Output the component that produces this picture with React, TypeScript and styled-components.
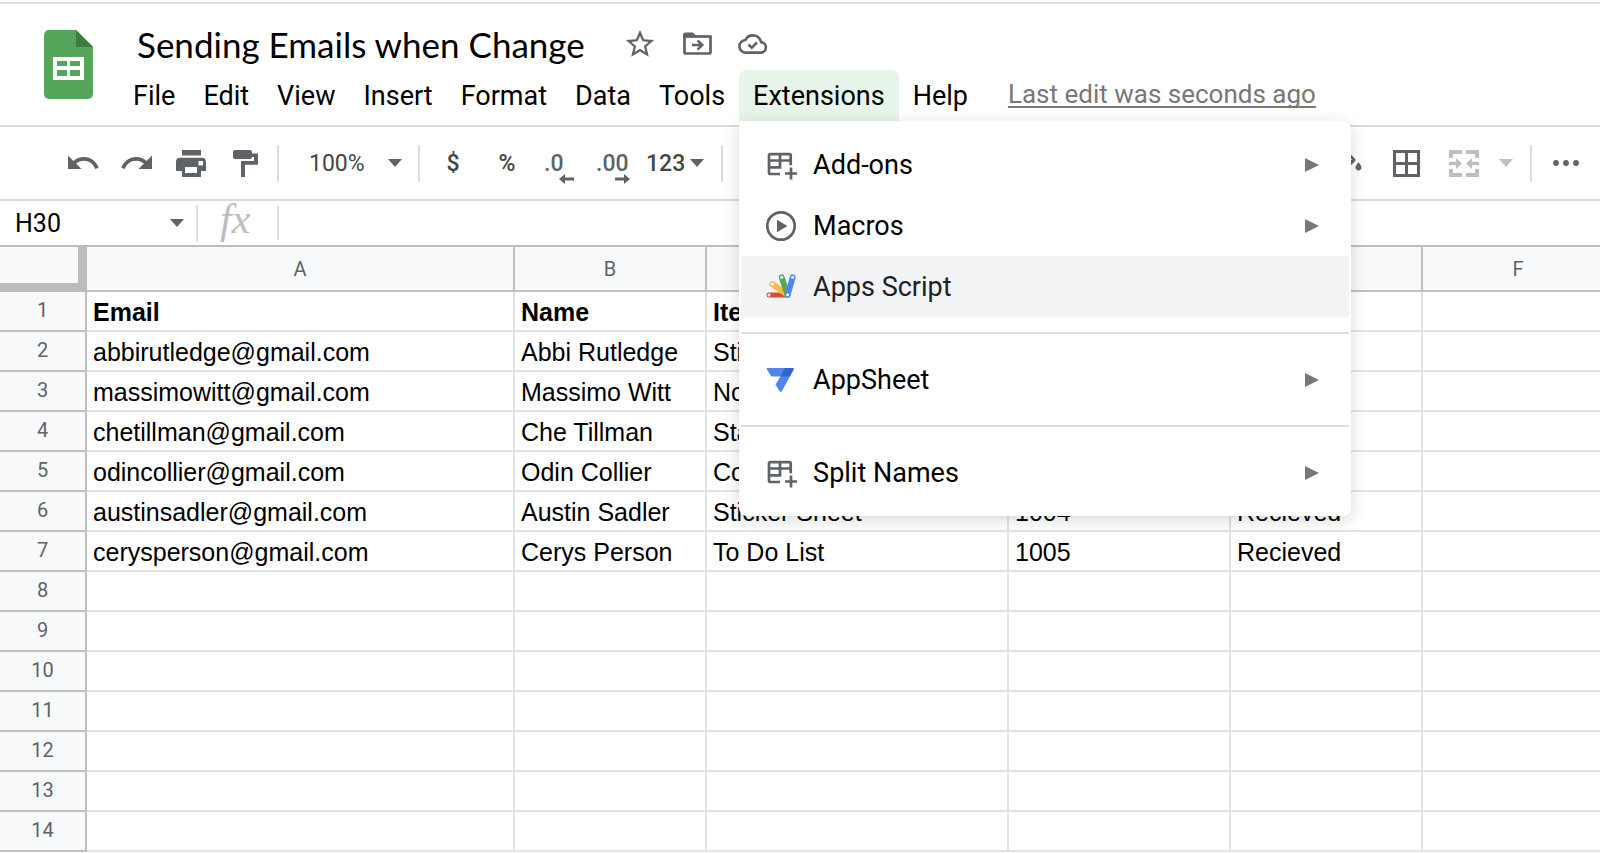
import React from "react";
import styled, { createGlobalStyle, css } from "styled-components";

const Global = createGlobalStyle`
  *, *::before, *::after { box-sizing: border-box; }
  body { margin: 0; background: #fff; overflow: hidden; }
  button, input, select { font: inherit; color: inherit; border: 0; background: none; padding: 0; margin: 0; }
  button, select { cursor: pointer; }
  svg { display: block; flex: none; overflow: visible; }
`;

const ui = `Roboto, "Liberation Sans", sans-serif`;

const Page = styled.div`
  min-height: 100vh;
  padding-top: 2px;
  font-family: ${ui};
  color: #000;
`;

const Header = styled.header`
  display: flex;
  align-items: flex-start;
  height: 125px;
  padding-left: 44px;
  border-top: 2px solid #dadce0;
  border-bottom: 2px solid #dadce0;
`;

const LogoLink = styled.a`
  padding-top: 26px;
  margin-right: 26px;
`;

const TitleRow = styled.div`
  display: flex;
  align-items: center;
  gap: 26px;
  height: 66px;
  padding: 14px 0 0 18px;
`;

const Title = styled.h1`
  margin: 0 12px 0 0;
  font-family: Lato, sans-serif;
  font-size: 35px;
  line-height: 44px;
  font-weight: 400;
  white-space: nowrap;
`;

const IconButton = styled.button`
  display: flex;
  align-items: center;
  justify-content: center;
  color: #5f6368;
`;

const MenuBar = styled.nav`
  display: flex;
  align-items: stretch;
  height: 51px;
  font-size: 27px;
  line-height: 48px;
  white-space: nowrap;
`;

const MenuSlot = styled.div`
  position: relative;
  display: flex;
`;

const MenuButton = styled.button<{ $open?: boolean }>`
  padding: 0 14px;
  border-radius: 8px 8px 0 0;
  background: ${(p) => (p.$open ? "#e6f4ea" : "transparent")};
`;

const LastEdit = styled.a`
  margin-left: 26px;
  color: #777;
  font-size: 26px;
  text-decoration: underline;
  text-decoration-thickness: 2px;
  text-underline-offset: 3px;
  text-decoration-skip-ink: none;
`;

const Popup = styled.div`
  position: absolute;
  top: 100%;
  left: 0;
  z-index: 5;
  width: 612px;
  padding: 13px 2px;
  border-radius: 0 8px 8px 8px;
  background: #fff;
  box-shadow: 0 4px 16px rgba(60, 64, 67, 0.2);
`;

const PopupItem = styled.button<{ $active?: boolean }>`
  display: flex;
  align-items: center;
  gap: 17px;
  width: 100%;
  height: 61px;
  padding: 0 30px 0 25px;
  color: ${(p) => (p.$active ? "#202124" : "#000")};
  background: ${(p) => (p.$active ? "#f1f3f4" : "transparent")};
`;

const PopupLabel = styled.span`
  flex: 1;
  text-align: left;
`;

const Divider = styled.hr`
  height: 2px;
  margin: 15px 0;
  border: 0;
  background: #dadce0;
`;

const Toolbar = styled.div`
  display: flex;
  align-items: center;
  height: 74px;
  padding: 0 5px 0 56px;
  border-bottom: 2px solid #dadce0;
  color: #444746;
  font-size: 23px;
  font-weight: 500;
`;

const Tool = styled(IconButton)<{ $wide?: boolean; $dim?: boolean }>`
  width: ${(p) => (p.$wide ? 58 : 54)}px;
  height: 48px;
  color: ${(p) => (p.$dim ? "#bdbfc1" : "#5f6368")};
`;

const TextTool = styled.button<{ $soft?: boolean }>`
  width: 54px;
  height: 48px;
  padding-left: 2px;
  color: ${(p) => (p.$soft ? "#5f6368" : "#444746")};
`;

const DecimalTool = styled(TextTool)<{ $arrowInset: number }>`
  position: relative;
  width: 52px;
  padding-left: 11px;
  text-align: left;
  svg { position: absolute; bottom: 3px; right: ${(p) => p.$arrowInset}px; }
`;

const FormatTool = styled(TextTool)`
  display: flex;
  align-items: center;
  gap: 5px;
  width: 79px;
  padding-left: 9px;
  svg { color: #5f6368; }
`;

const MergeCaret = styled(IconButton)`
  width: 32px;
  height: 48px;
  padding-right: 7px;
  color: #bdbfc1;
`;

const Separator = styled.span`
  width: 2px;
  height: 37px;
  margin: 0 5px;
  background: #dadce0;
`;

const RightTools = styled.div`
  display: flex;
  align-items: center;
  margin-left: auto;
`;

const ZoomBox = styled.label`
  display: flex;
  align-items: center;
  width: 129px;
  padding: 0 11px 0 25px;
  svg { margin-left: -14px; color: #5f6368; pointer-events: none; }
`;

const ZoomSelect = styled.select`
  flex: 1;
  height: 48px;
  font-weight: 400;
  appearance: none;
  outline: 0;
`;

const FormulaBar = styled.div`
  display: flex;
  align-items: center;
  height: 46px;
  border-bottom: 2px solid #bdbdbd;
`;

const NameBox = styled.label`
  display: flex;
  align-items: center;
  width: 198px;
  height: 36px;
  padding: 0 12px 0 15px;
  border-right: 2px solid #dadce0;
  svg { color: #5f6368; }
`;

const NameInput = styled.input`
  flex: 1;
  min-width: 0;
  font-size: 25px;
  outline: 0;
`;

const Fx = styled.span`
  width: 81px;
  height: 34px;
  padding-left: 22px;
  border-right: 2px solid #dadce0;
  color: #bdbdbd;
  font: italic 42px/26px "Liberation Serif", serif;
`;

const FormulaInput = styled.input`
  flex: 1;
  height: 40px;
  padding-left: 12px;
  font-size: 25px;
  outline: 0;
`;

const SheetArea = styled.main`
  overflow: hidden;
`;

const Grid = styled.table`
  width: 1615px;
  table-layout: fixed;
  border-collapse: separate;
  border-spacing: 0;
`;

const headCell = css`
  padding: 0;
  background: #f8f9fa;
  color: #5f6368;
  font-size: 20px;
  line-height: 24px;
  font-weight: 400;
  text-align: center;
  border-right: 2px solid #c0c0c0;
  border-bottom: 2px solid #c0c0c0;
`;

const ColumnHead = styled.th`
  ${headCell}
  height: 45px;
`;

const Corner = styled.td`
  height: 45px;
  padding: 0;
  background: #f8f9fa;
  border-right: 9px solid #bcbcbc;
  border-bottom: 9px solid #bcbcbc;
`;

const RowHead = styled.th`
  ${headCell}
  height: 40px;
  padding-bottom: 2px;
`;

const Cell = styled.td<{ $bold?: boolean }>`
  height: 40px;
  padding: 2px 0 0 6px;
  overflow: hidden;
  font: ${(p) => (p.$bold ? 700 : 400)} 25px/30px "Liberation Sans", Arial, sans-serif;
  white-space: nowrap;
  border-right: 2px solid #e2e2e2;
  border-bottom: 2px solid #e2e2e2;
`;

const Caret = () => (
  <svg width="14" height="8" viewBox="0 0 14 8" fill="currentColor" aria-hidden="true">
    <path d="M0 0h14L7 8z" />
  </svg>
);

const Glyph = ({ d, size = 36 }: { d: string; size?: number }) => (
  <svg width={size} height={size} viewBox="0 0 24 24" fill="currentColor" aria-hidden="true">
    <path d={d} />
  </svg>
);

const paths = {
  undo: "M12.5 8c-2.65 0-5.05.99-6.9 2.6L2 7v9h9l-3.62-3.62c1.39-1.16 3.16-1.88 5.12-1.88 3.54 0 6.55 2.31 7.6 5.5l2.37-.78C21.08 11.03 17.15 8 12.5 8z",
  redo: "M18.4 10.6C16.55 8.99 14.15 8 11.5 8c-4.65 0-8.58 3.03-9.96 7.22L3.9 16c1.05-3.19 4.05-5.5 7.6-5.5 1.95 0 3.73.72 5.12 1.88L13 16h9V7l-3.6 3.6z",
  fill: "M16.56 8.94L7.62 0 6.21 1.41l2.38 2.38-5.15 5.15c-.59.59-.59 1.54 0 2.12l5.5 5.5c.29.29.68.44 1.06.44s.77-.15 1.06-.44l5.5-5.5c.59-.58.59-1.53 0-2.12zM5.21 10L10 5.21 14.79 10H5.21zM19 11.5s-2 2.17-2 3.5c0 1.1.9 2 2 2s2-.9 2-2c0-1.33-2-3.5-2-3.5z",
  star: "M22 9.24l-7.19-.62L12 2 9.19 8.63 2 9.24l5.46 4.73L5.82 21 12 17.27 18.18 21l-1.63-7.03L22 9.24zM12 15.4l-3.76 2.27 1-4.28-3.32-2.88 4.38-.38L12 6.1l1.71 4.04 4.38.38-3.32 2.88 1 4.28L12 15.4z",
};

const Logo = () => (
  <svg width="49" height="69" viewBox="0 0 49 69" role="img" aria-label="Sheets">
    <path d="M5 0h27l17 17v47a5 5 0 0 1-5 5H5a5 5 0 0 1-5-5V5a5 5 0 0 1 5-5z" fill="#57a55a" />
    <path d="M32 0l17 17H32z" fill="#3b7d3f" />
    <path d="M9 27h31v23H9z" fill="#fff" />
    <path d="M13 31h10v5H13zM26 31h10v5H26zM13 40h10v6H13zM26 40h10v6H26z" fill="#57a55a" />
  </svg>
);

const Folder = () => (
  <svg width="29" height="24" viewBox="0 0 29 24" fill="none" stroke="#5f6368" aria-hidden="true">
    <path d="M1.500 4.500h26V20a1.500 1.500 0 0 1-1.500 1.500H3A1.500 1.500 0 0 1 1.500 20z" strokeWidth="2.700" />
    <path d="M0 5.500V3a2.500 2.500 0 0 1 2.500-2.500H10l3 3H26a3 3 0 0 1 3 2z" fill="#5f6368" stroke="none" />
    <path d="M9 13h10M14.500 8.300l4.800 4.700-4.800 4.700" strokeWidth="2.500" />
  </svg>
);

const Cloud = () => (
  <svg width="30" height="22" viewBox="0 0 30 22" fill="none" stroke="#5f6368" strokeWidth="2.600" aria-hidden="true">
    <path d="M8 19.600a6.300 6.300 0 0 1-.6-12.600 8.300 8.300 0 0 1 15.600 2.100 5.300 5.300 0 0 1 .6 10.500z" />
    <path d="M10.500 11.500l3.300 3.200 5.200-5.200" />
  </svg>
);

const Print = () => (
  <svg width="30" height="27" viewBox="0 0 30 27" fill="currentColor" aria-hidden="true">
    <path d="M6 0h19v5.500H6z" />
    <path fillRule="evenodd" d="M4 7.700h22a4 4 0 0 1 4 4V21h-5v6H6v-6H0v-9.300a4 4 0 0 1 4-4zM9 17v6h12v-6zM22.500 11v4.500h4.500V11z" />
  </svg>
);

const Paint = () => (
  <svg width="25" height="27" viewBox="0 0 25 27" fill="currentColor" aria-hidden="true">
    <path d="M2 0h15a2 2 0 0 1 2 2v1.500h6v11.200H12V27H8V11h13V7h-2a2 2 0 0 1-2 2H2a2 2 0 0 1-2-2V2a2 2 0 0 1 2-2z" />
  </svg>
);

const Borders = () => (
  <svg width="27" height="27" viewBox="0 0 27 27" fill="currentColor" aria-hidden="true">
    <path fillRule="evenodd" d="M0 0h27v27H0zM3 3v9h9V3zM15 3v9h9V3zM3 15v9h9v-9zM15 15v9h9v-9z" />
  </svg>
);

const Merge = () => (
  <svg width="30" height="27" viewBox="0 0 30 27" fill="currentColor" aria-hidden="true">
    <path d="M0 0h13v4H4v4H0zM17 0h13v8h-4V4h-9zM0 19h4v4h9v4H0zM26 19h4v8H17v-4h9z" />
    <path d="M0 11.700h7V8l6 5.500L7 19v-3.700H0zM30 11.700h-7V8l-6 5.500 6 5.500v-3.700h7z" />
  </svg>
);

const More = () => (
  <svg width="26" height="6" viewBox="0 0 26 6" fill="currentColor" aria-hidden="true">
    <circle cx="3" cy="3" r="2.900" />
    <circle cx="13" cy="3" r="2.900" />
    <circle cx="23" cy="3" r="2.900" />
  </svg>
);

const SmallArrow = ({ left }: { left?: boolean }) => (
  <svg width="15" height="10" viewBox="0 0 15 10" fill="currentColor" aria-hidden="true">
    <path d={left ? "M0 5l6-5v3.400h9v3.200H6V10z" : "M15 5L9 0v3.400H0v3.200h9V10z"} />
  </svg>
);

const AddonIcon = () => (
  <svg width="30" height="30" viewBox="0 0 30 30" fill="none" stroke="#5f6368" strokeWidth="2.700" aria-hidden="true">
    <path d="M24.700 15.300V5.700a1.500 1.500 0 0 0-1.500-1.500H4.500A1.500 1.500 0 0 0 3 5.700v16.800A1.500 1.500 0 0 0 4.500 24H14M3 10.500h21.700M3 17.300h11V4.200" />
    <path d="M25 17.500v12M19 23.500h12" />
  </svg>
);

const MacroIcon = () => (
  <svg width="30" height="30" viewBox="0 0 30 30" aria-hidden="true">
    <circle cx="15" cy="15" r="13.700" fill="none" stroke="#5f6368" strokeWidth="2.700" />
    <path d="M11 8.700L21.500 15 11 21.300z" fill="#5f6368" />
  </svg>
);

const ScriptIcon = () => (
  <svg width="30" height="26" viewBox="0 0 30 26" strokeLinecap="round" strokeWidth="5.800" aria-hidden="true">
    <path d="M3 21h18" stroke="#dc4b3e" strokeWidth="5" />
    <path d="M6.300 10l15 10.500" stroke="#f3bd42" />
    <path d="M15.700 3.300l5.800 17.500" stroke="#57a55a" />
    <path d="M26.700 3.300l-5 17.500" stroke="#4f86ec" />
    <g fill="#fff">
      <circle cx="3" cy="21" r="1.500" />
      <circle cx="6.300" cy="10" r="1.500" />
      <circle cx="15.700" cy="3.300" r="1.500" />
      <circle cx="26.700" cy="3.300" r="1.500" />
      <circle cx="21.600" cy="20.800" r="1.500" />
    </g>
  </svg>
);

const AppSheetIcon = () => (
  <svg width="30" height="24" viewBox="0 0 30 24" aria-hidden="true">
    <path d="M1.500 0H27a.8.8 0 0 1 .7 1.200L16 23a1.500 1.500 0 0 1-2.600 0L9.500 16.500 14.500 8.500H5.500L.8 1.300C.4.700.8 0 1.500 0z" fill="#4f86ec" />
    <path d="M19 0h8a.8.8 0 0 1 .7 1.200L23.700 8.500h-9.200z" fill="#2f64cc" />
  </svg>
);

const SubArrow = () => (
  <svg width="14" height="14" viewBox="0 0 14 14" fill="#777" aria-hidden="true">
    <path d="M0 0l14 7-14 7z" />
  </svg>
);

const menus = ["File", "Edit", "View", "Insert", "Format", "Data", "Tools"];

const columns = [
  { name: "A", width: 428 },
  { name: "B", width: 192 },
  { name: "C", width: 302 },
  { name: "D", width: 222 },
  { name: "E", width: 192 },
  { name: "F", width: 192 },
];

const rows: string[][] = [
  ["Email", "Name", "Item"],
  ["abbirutledge@gmail.com", "Abbi Rutledge", "Sticker Sheet"],
  ["massimowitt@gmail.com", "Massimo Witt", "Notebook"],
  ["chetillman@gmail.com", "Che Tillman", "Stamps"],
  ["odincollier@gmail.com", "Odin Collier", "Coasters"],
  ["austinsadler@gmail.com", "Austin Sadler", "Sticker Sheet", "1004", "Recieved"],
  ["cerysperson@gmail.com", "Cerys Person", "To Do List", "1005", "Recieved"],
  ...Array.from({ length: 7 }, () => []),
];

export default function App() {
  return (
    <Page>
      <Global />
      <Header>
        <LogoLink href="#" aria-label="Sheets home">
          <Logo />
        </LogoLink>
        <div>
          <TitleRow>
            <Title>Sending Emails when Change</Title>
            <IconButton aria-label="Star"><Glyph d={paths.star} size={34} /></IconButton>
            <IconButton aria-label="Move"><Folder /></IconButton>
            <IconButton aria-label="Document status"><Cloud /></IconButton>
          </TitleRow>
          <MenuBar>
            {menus.map((m) => (
              <MenuButton key={m}>{m}</MenuButton>
            ))}
            <MenuSlot>
              <MenuButton $open aria-expanded="true">Extensions</MenuButton>
              <Popup role="menu">
                <PopupItem role="menuitem"><AddonIcon /><PopupLabel>Add-ons</PopupLabel><SubArrow /></PopupItem>
                <PopupItem role="menuitem"><MacroIcon /><PopupLabel>Macros</PopupLabel><SubArrow /></PopupItem>
                <PopupItem role="menuitem" $active><ScriptIcon /><PopupLabel>Apps Script</PopupLabel></PopupItem>
                <Divider />
                <PopupItem role="menuitem"><AppSheetIcon /><PopupLabel>AppSheet</PopupLabel><SubArrow /></PopupItem>
                <Divider />
                <PopupItem role="menuitem"><AddonIcon /><PopupLabel>Split Names</PopupLabel><SubArrow /></PopupItem>
              </Popup>
            </MenuSlot>
            <MenuButton>Help</MenuButton>
            <LastEdit href="#">Last edit was seconds ago</LastEdit>
          </MenuBar>
        </div>
      </Header>
      <Toolbar>
        <Tool aria-label="Undo"><Glyph d={paths.undo} /></Tool>
        <Tool aria-label="Redo"><Glyph d={paths.redo} /></Tool>
        <Tool aria-label="Print"><Print /></Tool>
        <Tool aria-label="Paint format"><Paint /></Tool>
        <Separator />
        <ZoomBox>
          <ZoomSelect aria-label="Zoom" defaultValue="100%">
            <option>100%</option>
          </ZoomSelect>
          <Caret />
        </ZoomBox>
        <Separator />
        <TextTool>$</TextTool>
        <TextTool>%</TextTool>
        <DecimalTool $soft $arrowInset={11} aria-label="Decrease decimal places">.0<SmallArrow left /></DecimalTool>
        <DecimalTool $soft $arrowInset={7} aria-label="Increase decimal places">.00<SmallArrow /></DecimalTool>
        <FormatTool>123<Caret /></FormatTool>
        <Separator />
        <RightTools>
          <Tool $wide aria-label="Fill color"><Glyph d={paths.fill} /></Tool>
          <Tool $wide aria-label="Borders"><Borders /></Tool>
          <Tool $wide $dim aria-label="Merge cells"><Merge /></Tool>
          <MergeCaret aria-label="Merge options"><Caret /></MergeCaret>
          <Separator />
          <Tool $wide aria-label="More"><More /></Tool>
        </RightTools>
      </Toolbar>
      <FormulaBar>
        <NameBox>
          <NameInput aria-label="Name box" defaultValue="H30" />
          <Caret />
        </NameBox>
        <Fx>fx</Fx>
        <FormulaInput aria-label="Formula" />
      </FormulaBar>
      <SheetArea>
        <Grid>
          <colgroup>
            <col style={{ width: 87 }} />
            {columns.map((c) => (
              <col key={c.name} style={{ width: c.width }} />
            ))}
          </colgroup>
          <thead>
            <tr>
              <Corner />
              {columns.map((c) => (
                <ColumnHead key={c.name} scope="col">{c.name}</ColumnHead>
              ))}
            </tr>
          </thead>
          <tbody>
            {rows.map((r, i) => (
              <tr key={i}>
                <RowHead scope="row">{i + 1}</RowHead>
                {columns.map((c, j) => (
                  <Cell key={c.name} $bold={i === 0}>{r[j]}</Cell>
                ))}
              </tr>
            ))}
          </tbody>
        </Grid>
      </SheetArea>
    </Page>
  );
}
